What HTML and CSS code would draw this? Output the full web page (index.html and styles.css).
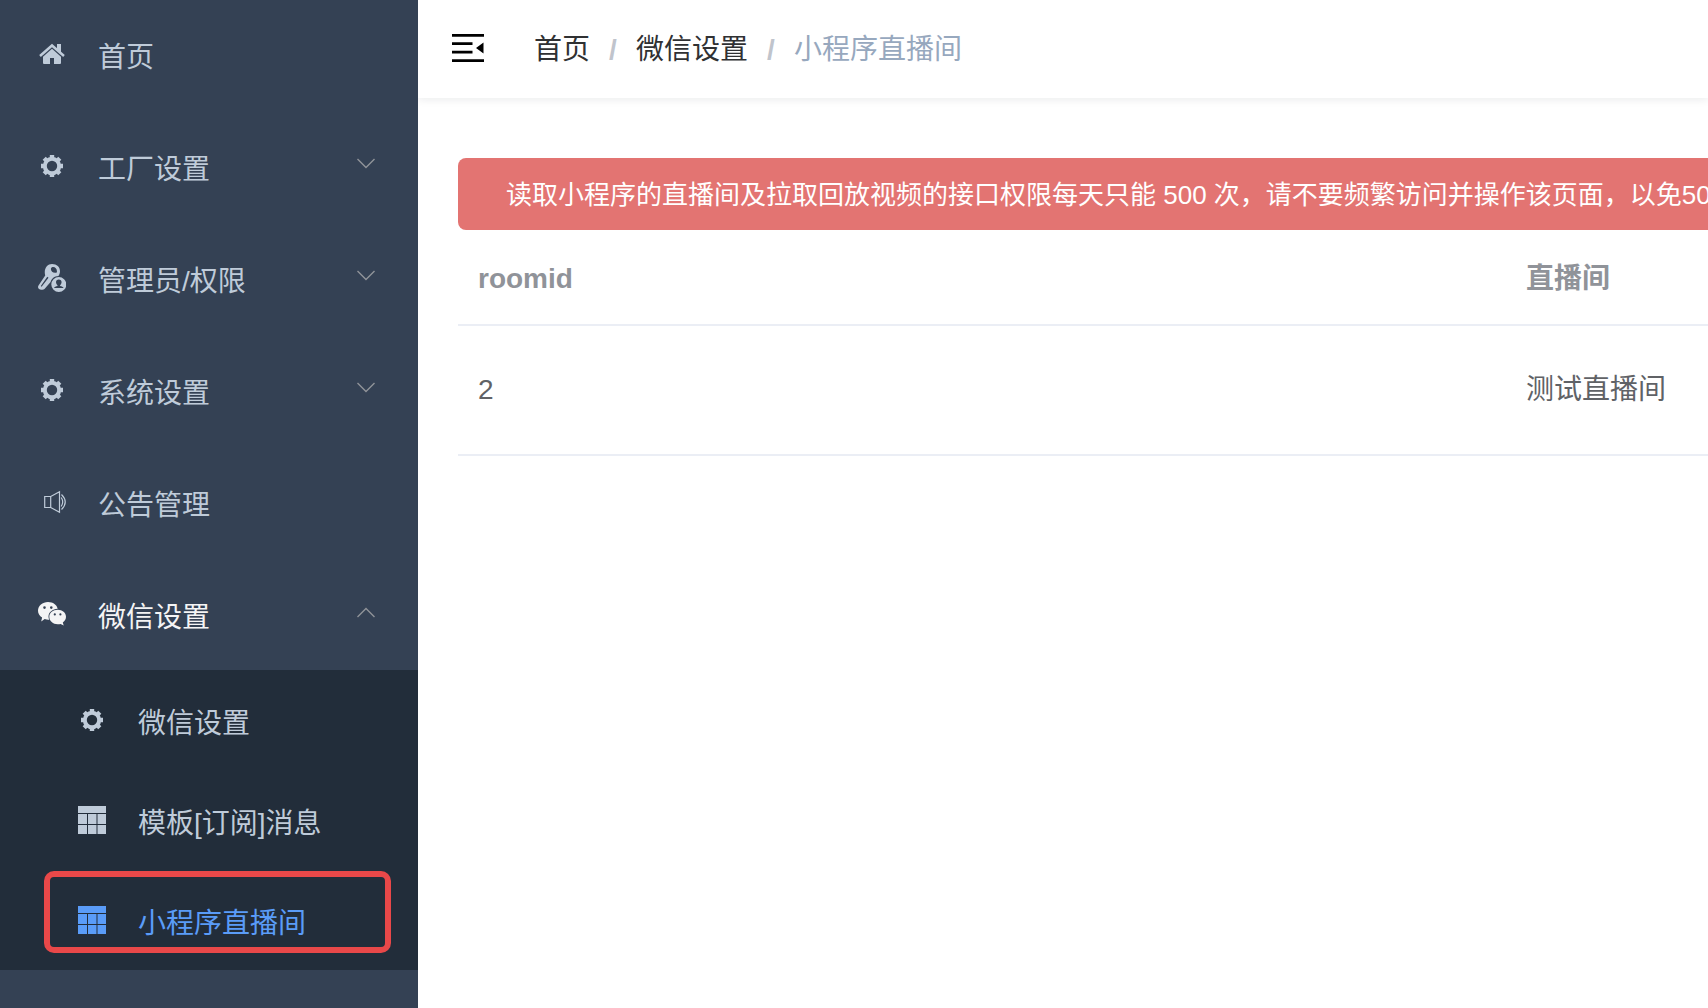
FILE: index.html
```html
<!DOCTYPE html>
<html lang="zh-CN">
<head>
  <meta charset="utf-8">
  <meta name="viewport" content="width=device-width, initial-scale=1">
  <title>小程序直播间</title>
  <link rel="stylesheet" href="styles.css">
</head>
<body>
  <svg class="sprite" aria-hidden="true">
    <symbol id="gear" viewBox="0 0 28 28">
      <path fill="none" stroke="currentColor" stroke-width="4" d="M14 6.800a7.200 7.200 0 1 0 0 14.400a7.200 7.200 0 1 0 0-14.400z"/>
      <path fill="none" stroke="currentColor" stroke-width="4.400" d="M14 3v3M14 22v3M3 14h3M22 14h3M6.200 6.200l2 2M19.800 19.800l2 2M6.200 21.800l2-2M19.800 8.200l2-2"/>
    </symbol>
    <symbol id="grid" viewBox="0 0 28 28">
      <path fill="currentColor" d="M0 0h28v7H0zM0 8h9v10H0zM10 8h8.500v10H10zM19.500 8H28v10h-8.500zM0 19h9v9H0zM10 19h8.500v9H10zM19.500 19H28v9h-8.500z"/>
    </symbol>
    <symbol id="down" viewBox="0 0 24 24">
      <path fill="none" stroke="currentColor" stroke-width="1.400" d="M3.500 5l8.500 8.500L20.500 5"/>
    </symbol>
    <symbol id="up" viewBox="0 0 24 24">
      <path fill="none" stroke="currentColor" stroke-width="1.400" d="M3.500 15l8.500-8.500L20.500 15"/>
    </symbol>
  </svg>
  <div class="app">
    <nav class="sidebar" aria-label="主菜单">
      <ul class="menu">
        <li><a class="item" href="#">
          <svg class="icon" viewBox="0 0 28 28"><path fill="currentColor" d="M14 3.800L26.800 15l-1.600 2L14 7.200 2.800 17 1.200 15zM19 4h4v9l-4-4zM14 8.700l9 8V23q0 1-1 1h-6v-6h-4v6H6q-1 0-1-1v-6.300z"/></svg>
          <span class="label">首页</span></a></li>
        <li><button class="item" type="button" aria-expanded="false">
          <svg class="icon"><use href="#gear"/></svg><span class="label">工厂设置</span><svg class="arrow"><use href="#down"/></svg></button></li>
        <li><button class="item" type="button" aria-expanded="false">
          <svg class="icon" viewBox="0 0 28 28">
            <path fill="currentColor" fill-rule="evenodd" d="M14 0C18.800 0 22 3 22 7.200c0 1.800-.6 3.300-1.600 4.700-4 .2-7 2.600-7.800 6L6.500 25c-1 1-2.500 .9-4.500.4C0 24.800-.4 22.800.5 21.600L7.200 11.500C5.500 5 9 0 14 0zM13 4.500c-.5 2.500 2 5 5.800 4C19.500 5.200 17.500 3 15.200 3 14 3 13.200 3.500 13 4.500zM9.300 12.800l-6.500 9.300.8.600 6.900-9z"/>
            <path fill="currentColor" fill-rule="evenodd" d="M20.800 13a7.500 7.500 0 1 1 0 15a7.500 7.500 0 1 1 0-15zM20.800 15.500c-2 0-3 1.500-2.700 3.200.2 1.200.8 2 1.400 2.500v.8c-1.700.4-3 .9-3.500 2h9.600c-.5-1.100-1.800-1.600-3.500-2v-.8c.6-.5 1.200-1.300 1.400-2.500.3-1.700-.7-3.200-2.700-3.200z"/>
          </svg><span class="label">管理员/权限</span><svg class="arrow"><use href="#down"/></svg></button></li>
        <li><button class="item" type="button" aria-expanded="false">
          <svg class="icon"><use href="#gear"/></svg><span class="label">系统设置</span><svg class="arrow"><use href="#down"/></svg></button></li>
        <li><a class="item" href="#">
          <svg class="icon" viewBox="0 0 28 28"><path fill="none" stroke="currentColor" stroke-width="1.200" d="M6.700 8.500h6v11h-6zM12.700 8.500L21.500 3.700v20.600l-8.800-4.800M23.200 9.500q3 4.500 0 9M23.500 6.500q7.500 7.500 0 15"/></svg>
          <span class="label">公告管理</span></a></li>
        <li><button class="item open" type="button" aria-expanded="true">
          <svg class="icon" viewBox="0 0 28 28">
            <path fill="currentColor" fill-rule="evenodd" d="M10 2c5 0 9 2.900 9.700 6.800-5.200.2-9.200 3.700-9.200 7.700q0 1.700.8 3.200-2.400.2-4.600-.7L3.200 21.400l.9-3.900C1.500 16 0 13.500 0 10.800 0 5.900 4.500 2 10 2zM6.500 6.300a1.300 1.300 0 1 0 0 2.600a1.300 1.300 0 1 0 0-2.600zM13.300 6.300a1.300 1.300 0 1 0 0 2.600a1.300 1.300 0 1 0 0-2.600z"/>
            <path fill="currentColor" fill-rule="evenodd" d="M19.700 9.700c4.700 0 8.300 3.100 8.300 7.100 0 2.500-1.200 4.400-3.200 5.700l.9 3-3.100-1.600q-1.300.4-2.900.4c-4.700 0-8.400-3.400-8.400-7.500s3.700-7.100 8.400-7.100zM16.800 13.300a1.100 1.100 0 1 0 0 2.200a1.100 1.100 0 1 0 0-2.200zM22.400 13.300a1.100 1.100 0 1 0 0 2.200a1.100 1.100 0 1 0 0-2.200z"/>
          </svg><span class="label">微信设置</span><svg class="arrow"><use href="#up"/></svg></button>
          <ul class="submenu">
            <li><a class="item sub" href="#"><svg class="icon"><use href="#gear"/></svg><span class="label">微信设置</span></a></li>
            <li><a class="item sub" href="#"><svg class="icon"><use href="#grid"/></svg><span class="label">模板[订阅]消息</span></a></li>
            <li class="marked"><a class="item sub current" href="#" aria-current="page"><svg class="icon"><use href="#grid"/></svg><span class="label">小程序直播间</span></a></li>
          </ul>
        </li>
      </ul>
    </nav>
    <div class="page">
      <header class="topbar">
        <button class="toggle" type="button" aria-label="收起菜单">
          <svg class="toggle-icon" viewBox="0 0 32 28"><path d="M0 0h32v2.800H0zM0 8.300h20.500v2.800H0zM0 16.800h20.500v2.800H0zM0 25.200h32V28H0zM31.500 8.500v11L24 14z"/></svg>
        </button>
        <nav class="crumbs" aria-label="面包屑">
          <a href="#">首页</a><span class="slash">/</span><a href="#">微信设置</a><span class="slash">/</span><span class="here">小程序直播间</span>
        </nav>
      </header>
      <main class="content">
        <p class="alert" role="alert">读取小程序的直播间及拉取回放视频的接口权限每天只能 500 次，请不要频繁访问并操作该页面，以免50</p>
        <table class="rooms">
          <thead><tr><th class="col-id" scope="col">roomid</th><th class="col-name" scope="col">直播间</th></tr></thead>
          <tbody><tr><td>2</td><td>测试直播间</td></tr></tbody>
        </table>
      </main>
    </div>
  </div>
</body>
</html>
```

FILE: styles.css
```css
* {
  box-sizing: border-box;
}

body {
  margin: 0;
  background: #fff;
  color: #606266;
  font-family: "Liberation Sans", "Noto Sans CJK SC", sans-serif;
  font-size: 28px;
  line-height: 36px;
}

.sprite {
  display: none;
}

.app {
  display: flex;
  height: 100vh;
  overflow: hidden;
}

/* Sidebar */
.sidebar {
  flex: 0 0 418px;
  overflow: hidden;
  background: #344154;
}

.menu,
.submenu {
  margin: 0;
  padding: 0;
  list-style: none;
}

.menu {
  margin-top: -2px;
}

.item {
  display: flex;
  align-items: center;
  gap: 32px;
  width: 100%;
  height: 112px;
  padding: 0 40px 0 38px;
  border: 0;
  background: none;
  color: #bfcbd9;
  font: inherit;
  text-align: left;
  text-decoration: none;
  cursor: pointer;
}

.item.open {
  color: #f4f4f5;
}

.item.sub {
  height: 100px;
  padding-left: 78px;
}

.item.current {
  color: #5a9cf8;
}

.icon {
  flex: none;
  width: 28px;
  height: 28px;
}

.label {
  flex: 1;
  padding-top: 8px;
  white-space: nowrap;
}

.arrow {
  flex: none;
  width: 24px;
  height: 24px;
  color: #909399;
}

.submenu {
  background: #222d3a;
}

.marked {
  position: relative;
}

.marked::after {
  content: "";
  position: absolute;
  top: 1px;
  right: 27px;
  bottom: 17px;
  left: 44px;
  border: 6px solid #e94849;
  border-radius: 10px;
  pointer-events: none;
}

/* Main area */
.page {
  flex: 1;
  min-width: 0;
  overflow: hidden;
}

.topbar {
  display: flex;
  align-items: center;
  gap: 50px;
  height: 98px;
  padding: 0 34px 2px;
  box-shadow: 0 2px 8px rgba(0, 21, 41, 0.08);
}

.toggle {
  display: flex;
  padding: 0;
  border: 0;
  background: none;
  cursor: pointer;
}

.toggle-icon {
  width: 32px;
  height: 28px;
}

.crumbs {
  display: flex;
  gap: 19px;
  padding-top: 4px;
  white-space: nowrap;
}

.crumbs a {
  color: #303133;
  text-decoration: none;
}

.slash {
  width: 8px;
  color: #c0c4cc;
  font-weight: 700;
}

.here {
  color: #97a8be;
}

.content {
  padding: 60px 0 0 40px;
}

.alert {
  margin: 0;
  padding: 19px 0 17px 48px;
  overflow: hidden;
  border-radius: 8px 0 0 8px;
  background: #e37472;
  color: #fff;
  font-size: 26px;
  white-space: nowrap;
}

.rooms {
  width: 100%;
  border-spacing: 0;
  table-layout: fixed;
}

.rooms th,
.rooms td {
  padding: 0 20px;
  border-bottom: 2px solid #ebeef5;
  text-align: left;
}

.rooms th {
  height: 96px;
  padding-top: 4px;
  color: #909399;
}

.rooms td {
  height: 130px;
}

.rooms .col-name {
  width: 202px;
}
```
